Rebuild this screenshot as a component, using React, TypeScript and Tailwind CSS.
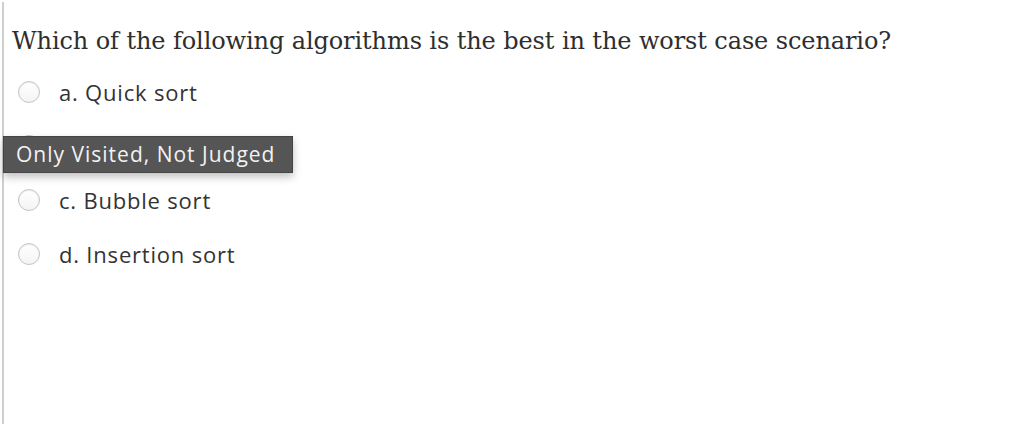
const options = ['a. Quick sort', 'b. Merge sort', 'c. Bubble sort', 'd. Insertion sort'];

export default function App() {
  return (
    <div className="h-[426px] w-[1036px] bg-white pt-[2px]">
      <div className="relative ml-[2px] h-[422px] border-l-2 border-[#cfcfcf] pl-[8px]">
        <h2 className="pt-[21px] font-['DejaVu_Serif',serif] text-[24px] leading-[36px] tracking-[-0.1px] text-[#2e2e2e]">
          Which of the following algorithms is the best in the worst case scenario?
        </h2>
        <div className="mt-[6px] flex flex-col">
          {options.map((o) => (
            <label key={o} className="flex h-[54px] items-center gap-[19px] pl-[6px] font-['Open_Sans',sans-serif] text-[22px] tracking-[0.8px] text-[#333]">
              <span className="h-[22px] w-[22px] shrink-0 rounded-full border border-[#c4c4c4] bg-gradient-to-b from-white to-[#f4f4f4] shadow-[inset_0_1px_1px_rgba(0,0,0,0.08)]" />
              {o}
            </label>
          ))}
        </div>
        <div className="absolute left-[-1px] top-[134px] flex h-[37px] w-[290px] items-center border border-[#444] bg-[#555] pl-[12px] font-['Open_Sans',sans-serif] text-[21px] tracking-[1px] text-[#f2f2f2] shadow-[0_4px_8px_rgba(0,0,0,0.25)]">
          Only Visited, Not Judged
        </div>
      </div>
    </div>
  );
}
